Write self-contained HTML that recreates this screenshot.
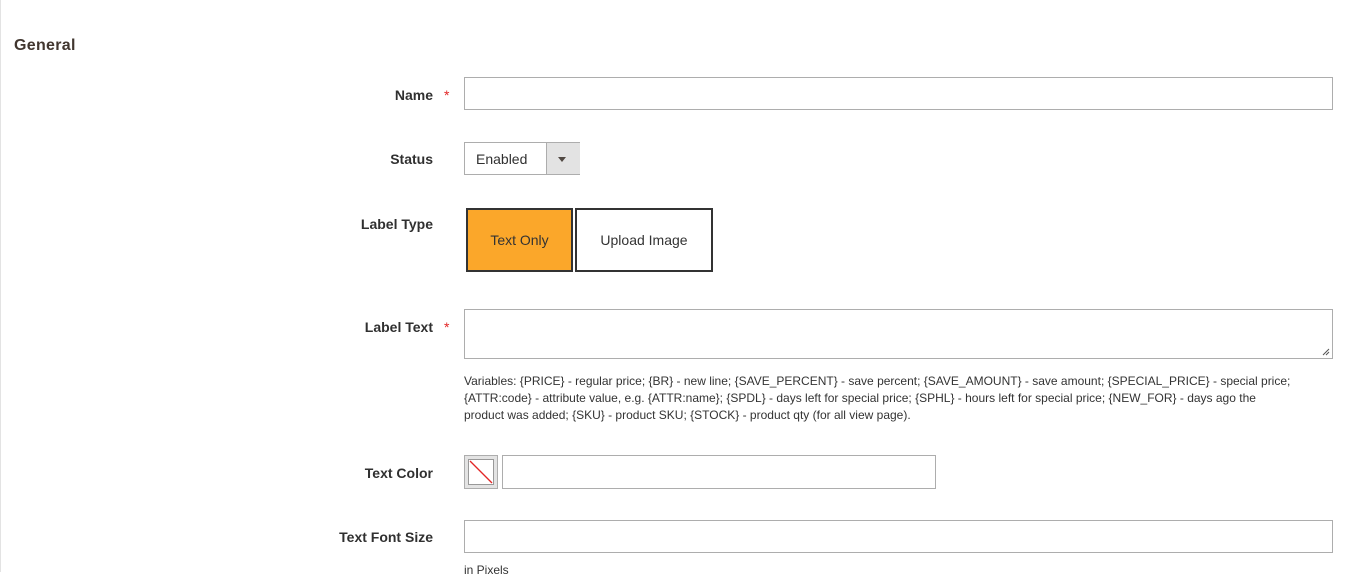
<!DOCTYPE html>
<html><head><style>
body{margin:0;width:1362px;height:572px;overflow:hidden;background:#fff;font-family:"Liberation Sans",sans-serif;position:relative}
.a{position:absolute}
.lbl{position:absolute;right:929px;font-size:14px;font-weight:bold;color:#303030;white-space:nowrap}
.req{position:absolute;left:444px;color:#e22626;font-size:14px}
.in{position:absolute;border:1px solid #adadad;background:#fff;box-sizing:border-box}
</style></head><body>
<div class="a" style="left:0;top:0;width:1px;height:572px;background:#e3e3e3"></div>
<div class="a" style="left:14px;top:37px;font-size:16px;font-weight:bold;color:#41362f;letter-spacing:.3px">General</div>

<div class="lbl" style="top:87px">Name</div><div class="req" style="top:87px">*</div>
<div class="in" style="left:464px;top:77px;width:869px;height:33px"></div>

<div class="lbl" style="top:151px">Status</div>
<div class="in" style="left:464px;top:142px;width:116px;height:33px"><span class="a" style="left:11px;top:8px;font-size:14px;color:#303030">Enabled</span><div class="a" style="left:81px;top:0;width:33px;height:31px;background:#e3e3e3;border-left:1px solid #adadad"></div><div class="a" style="left:93px;top:14px;width:0;height:0;border-left:4px solid transparent;border-right:4px solid transparent;border-top:5px solid #514943"></div></div>

<div class="lbl" style="top:216px">Label Type</div>
<div class="a" style="left:466px;top:208px;width:107px;height:64px;box-sizing:border-box;border:2px solid #333;background:#fba72a;font-size:14px;color:#333;display:flex;align-items:center;justify-content:center">Text Only</div>
<div class="a" style="left:575px;top:208px;width:138px;height:64px;box-sizing:border-box;border:2px solid #333;background:#fff;font-size:14px;color:#333;display:flex;align-items:center;justify-content:center">Upload Image</div>

<div class="lbl" style="top:319px">Label Text</div><div class="req" style="top:319px">*</div>
<div class="in" style="left:464px;top:309px;width:869px;height:50px"><svg class="a" style="right:2px;bottom:2px" width="8" height="8"><path d="M1 7L7 1M4 7L7 4" stroke="#555" stroke-width="1"/></svg></div>
<div class="a" style="left:464px;top:373px;width:835px;font-size:12px;line-height:17px;color:#333">Variables: {PRICE} - regular price; {BR} - new line; {SAVE_PERCENT} - save percent; {SAVE_AMOUNT} - save amount; {SPECIAL_PRICE} - special price; {ATTR:code} - attribute value, e.g. {ATTR:name}; {SPDL} - days left for special price; {SPHL} - hours left for special price; {NEW_FOR} - days ago the product was added; {SKU} - product SKU; {STOCK} - product qty (for all view page).</div>

<div class="lbl" style="top:465px">Text Color</div>
<div class="a" style="left:464px;top:455px;width:34px;height:34px;box-sizing:border-box;border:1px solid #adadad;background:#e3e3e3"><div class="a" style="left:3px;top:3px;width:26px;height:26px;background:#fff;border:1px solid #999;box-sizing:border-box"></div><svg class="a" style="left:3px;top:3px" width="26" height="26"><path d="M2 2L24 24" stroke="#e22626" stroke-width="1.3"/></svg></div>
<div class="in" style="left:502px;top:455px;width:434px;height:34px"></div>

<div class="lbl" style="top:529px">Text Font Size</div>
<div class="in" style="left:464px;top:520px;width:869px;height:33px"></div>
<div class="a" style="left:464px;top:563px;font-size:12px;color:#333">in Pixels</div>
</body></html>
